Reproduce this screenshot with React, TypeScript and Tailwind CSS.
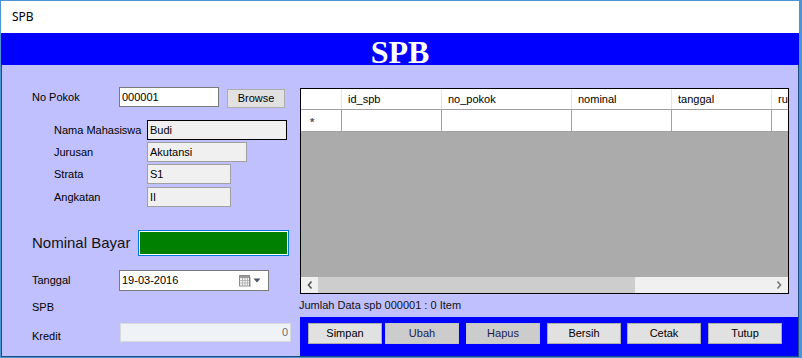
import React from "react";

const F = "font-['Liberation_Sans',Arial,sans-serif]";

function Btn({ label, ml, dim }: { label: string; ml: string; dim?: boolean }) {
  return (
    <div
      className={
        "w-[74px] h-[21px] flex items-center justify-center text-[11px] border " +
        ml +
        (dim
          ? " bg-[#cccccc] border-[#c4c4c4] text-[#1c1c50]"
          : " bg-[#e1e1e1] border-[#adadad] text-black")
      }
    >
      {label}
    </div>
  );
}

function Chevron({ dir }: { dir: "l" | "r" }) {
  return (
    <svg width="6" height="8" viewBox="0 0 6 8">
      {dir === "l" ? (
        <path d="M4.5 0.5 L1.5 4 L4.5 7.5" fill="none" stroke="#555" strokeWidth="1.6" />
      ) : (
        <path d="M1.5 0.5 L4.5 4 L1.5 7.5" fill="none" stroke="#777" strokeWidth="1.6" />
      )}
    </svg>
  );
}

export default function App() {
  return (
    <div className={"w-[802px] h-[358px] bg-[#4a95d3] overflow-hidden " + F}>
      <div className="ml-[1px] mt-[1px] w-[798px] h-[356px] flex flex-col bg-[#1f4c82]">
        {/* title bar */}
        <div className="h-[32px] bg-white flex items-center pl-[11px] text-[12px] text-black font-['Noto_Sans',sans-serif]">
          SPB
        </div>
        {/* blue band */}
        <div className="h-[32px] bg-[#0000ff] flex justify-center pt-[6px]">
          <span className="text-white text-[32px] leading-[26px] h-[26px] font-bold font-['Liberation_Serif','Times_New_Roman',serif]">
            SPB
          </span>
        </div>
        {/* body */}
        <div className="flex-1 mx-[1px] mb-[1px] bg-[#c0c0ff] flex text-[11px] text-black">
          {/* left panel */}
          <div className="w-[298px] flex flex-col">
            <div className="mt-[22px] flex items-start">
              <div className="w-[117px] pl-[30px] h-[20px] flex items-center">No Pokok</div>
              <div className="w-[100px] h-[20px] bg-white border border-[#7a7a7a] flex items-center pl-[2px]">000001</div>
              <div className="ml-[8px] mt-[2px] w-[58px] h-[19px] bg-[#e1e1e1] border border-[#adadad] flex items-center justify-center">
                Browse
              </div>
            </div>
            <div className="mt-[12px] flex items-start">
              <div className="w-[145px] pl-[52px] h-[20px] flex items-center">Nama Mahasiswa</div>
              <div className="w-[140px] h-[20px] bg-[#f0f0f0] border border-black flex items-center pl-[2px]">Budi</div>
            </div>
            <div className="mt-[2px] flex items-start">
              <div className="w-[145px] pl-[52px] h-[20px] flex items-center">Jurusan</div>
              <div className="w-[100px] h-[20px] bg-[#f0f0f0] border border-[#a0a0a0] flex items-center pl-[2px]">Akutansi</div>
            </div>
            <div className="mt-[2px] flex items-start">
              <div className="w-[145px] pl-[52px] h-[20px] flex items-center">Strata</div>
              <div className="w-[84px] h-[20px] bg-[#f0f0f0] border border-[#a0a0a0] flex items-center pl-[2px]">S1</div>
            </div>
            <div className="mt-[3px] flex items-start">
              <div className="w-[145px] pl-[52px] h-[20px] flex items-center">Angkatan</div>
              <div className="w-[84px] h-[20px] bg-[#f0f0f0] border border-[#a0a0a0] flex items-center pl-[2px]">II</div>
            </div>
            <div className="mt-[23px] flex items-start">
              <div className="w-[136px] pl-[30px] h-[26px] flex items-center text-[15px] text-[#111]">Nominal Bayar</div>
              <div className="w-[151px] h-[26px] border border-[#0078d7] bg-white p-[1px]">
                <div className="w-full h-full bg-[#008000]" />
              </div>
            </div>
            <div className="mt-[14px] flex items-start">
              <div className="w-[117px] pl-[30px] h-[21px] flex items-center">Tanggal</div>
              <div className="w-[150px] h-[21px] bg-white border border-[#7a7a7a] flex items-center pl-[2px]">
                <span className="flex-1">19-03-2016</span>
                <svg width="12" height="12" viewBox="0 0 12 12" className="mr-[2px]">
                  <rect x="0.5" y="0.5" width="10" height="10.5" fill="#f6f6f6" stroke="#8c8c8c" />
                  <rect x="1" y="1" width="9" height="2" fill="#9a9a9a" />
                  <path d="M3.5 3v8M6 3v8M8.5 3v8M1 5.5h9M1 8h9" stroke="#b8b8b8" strokeWidth="1" />
                  <path d="M11.5 2v10H2" stroke="#c8c8c8" fill="none" />
                </svg>
                <svg width="8" height="5" viewBox="0 0 8 5" className="mr-[7px]">
                  <path d="M0.5 0.5h7L4 4.5z" fill="#4a5568" />
                </svg>
              </div>
            </div>
            <div className="mt-[9px] h-[14px] pl-[30px] flex items-center">SPB</div>
            <div className="mt-[9px] flex items-start">
              <div className="w-[118px] pl-[30px] pt-[7px] leading-[13px]">Kredit</div>
              <div className="w-[171px] h-[19px] bg-[#eff3f8] border border-[#d9d9d9] flex items-center justify-end pr-[2px] text-[#6d6d6d]">
                0
              </div>
            </div>
          </div>
          {/* right panel */}
          <div className="w-[498px] flex flex-col">
            <div className="mt-[23px] w-[489px] h-[206px] border border-black flex flex-col overflow-hidden bg-[#ababab]">
              <div className="h-[21px] flex bg-white border-b border-[#a0a0a0] shrink-0">
                <div className="w-[41px] shrink-0 border-r border-[#e3e3e3]" />
                <div className="w-[100px] shrink-0 border-r border-[#e3e3e3] pl-[6px] flex items-center">id_spb</div>
                <div className="w-[130px] shrink-0 border-r border-[#e3e3e3] pl-[6px] flex items-center">no_pokok</div>
                <div className="w-[100px] shrink-0 border-r border-[#e3e3e3] pl-[6px] flex items-center">nominal</div>
                <div className="w-[100px] shrink-0 border-r border-[#e3e3e3] pl-[6px] flex items-center">tanggal</div>
                <div className="w-[60px] shrink-0 pl-[6px] flex items-center">ruang</div>
              </div>
              <div className="h-[22px] flex bg-white border-b border-[#a0a0a0] shrink-0">
                <div className="w-[41px] shrink-0 border-r border-[#a0a0a0] pl-[9px] pt-[3px] flex items-center text-[#555] font-bold">*</div>
                <div className="w-[100px] shrink-0 border-r border-[#a0a0a0]" />
                <div className="w-[130px] shrink-0 border-r border-[#a0a0a0]" />
                <div className="w-[100px] shrink-0 border-r border-[#a0a0a0]" />
                <div className="w-[100px] shrink-0 border-r border-[#a0a0a0]" />
                <div className="w-[60px] shrink-0" />
              </div>
              <div className="flex-1" />
              <div className="h-[16px] flex bg-[#f0f0f0] shrink-0">
                <div className="w-[17px] flex items-center justify-center">
                  <Chevron dir="l" />
                </div>
                <div className="w-[317px] bg-[#cdcdcd]" />
                <div className="flex-1" />
                <div className="w-[17px] flex items-center justify-center pr-[1px]">
                  <Chevron dir="r" />
                </div>
              </div>
            </div>
            <div className="mt-[3px] h-[16px] -ml-px flex items-center text-[#111]">Jumlah Data spb 000001 : 0 Item</div>
            <div className="mt-[4px] flex-1 bg-[#0000ff] flex items-start pt-[6px]">
              <Btn label="Simpan" ml="ml-[8px]" />
              <Btn label="Ubah" ml="ml-[3px]" dim />
              <Btn label="Hapus" ml="ml-[7px]" dim />
              <Btn label="Bersih" ml="ml-[7px]" />
              <Btn label="Cetak" ml="ml-[6px]" />
              <Btn label="Tutup" ml="ml-[7px]" />
            </div>
          </div>
        </div>
      </div>
    </div>
  );
}
